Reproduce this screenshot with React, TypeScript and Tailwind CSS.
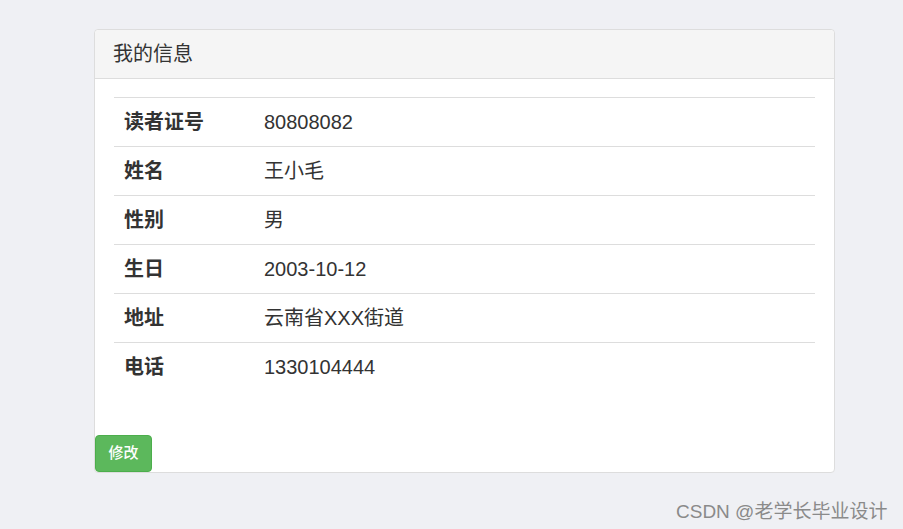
import React from "react";

const rows: [string, string][] = [
  ["读者证号", "80808082"],
  ["姓名", "王小毛"],
  ["性别", "男"],
  ["生日", "2003-10-12"],
  ["地址", "云南省XXX街道"],
  ["电话", "1330104444"],
];

export default function App() {
  return (
    <div
      className="relative w-[903px] h-[529px] bg-[#eff0f4] overflow-hidden"
      style={{ fontFamily: '"Liberation Sans", "Noto Sans CJK SC", sans-serif' }}
    >
      <div className="pt-[29px] pl-[94px]">
        <div className="w-[741px] bg-white border border-[#dddddd] rounded-[4px] flex flex-col">
          <div className="h-[49px] bg-[#f5f5f5] border-b border-[#dddddd] rounded-t-[4px] flex items-center pl-[18px] text-[20px] text-[#333333]">
            我的信息
          </div>
          <div className="pt-[18px] px-[19px]">
            <div className="flex flex-col">
              {rows.map(([k, v]) => (
                <div key={k} className="flex h-[49px] border-t border-[#dddddd] items-center text-[20px] text-[#333333]">
                  <div className="w-[150px] pl-[10px] font-bold">{k}</div>
                  <div>{v}</div>
                </div>
              ))}
            </div>
          </div>
          <div className="pt-[44px]">
            <button className="h-[37px] w-[57px] bg-[#5cb85c] border border-[#4cae4c] rounded-[4px] text-white text-[15px] font-medium flex items-center justify-center">
              修改
            </button>
          </div>
        </div>
      </div>
      <div className="absolute left-[676px] top-[498px] text-[19px] text-[#8a8a8a] whitespace-nowrap">
        CSDN @老学长毕业设计
      </div>
    </div>
  );
}
